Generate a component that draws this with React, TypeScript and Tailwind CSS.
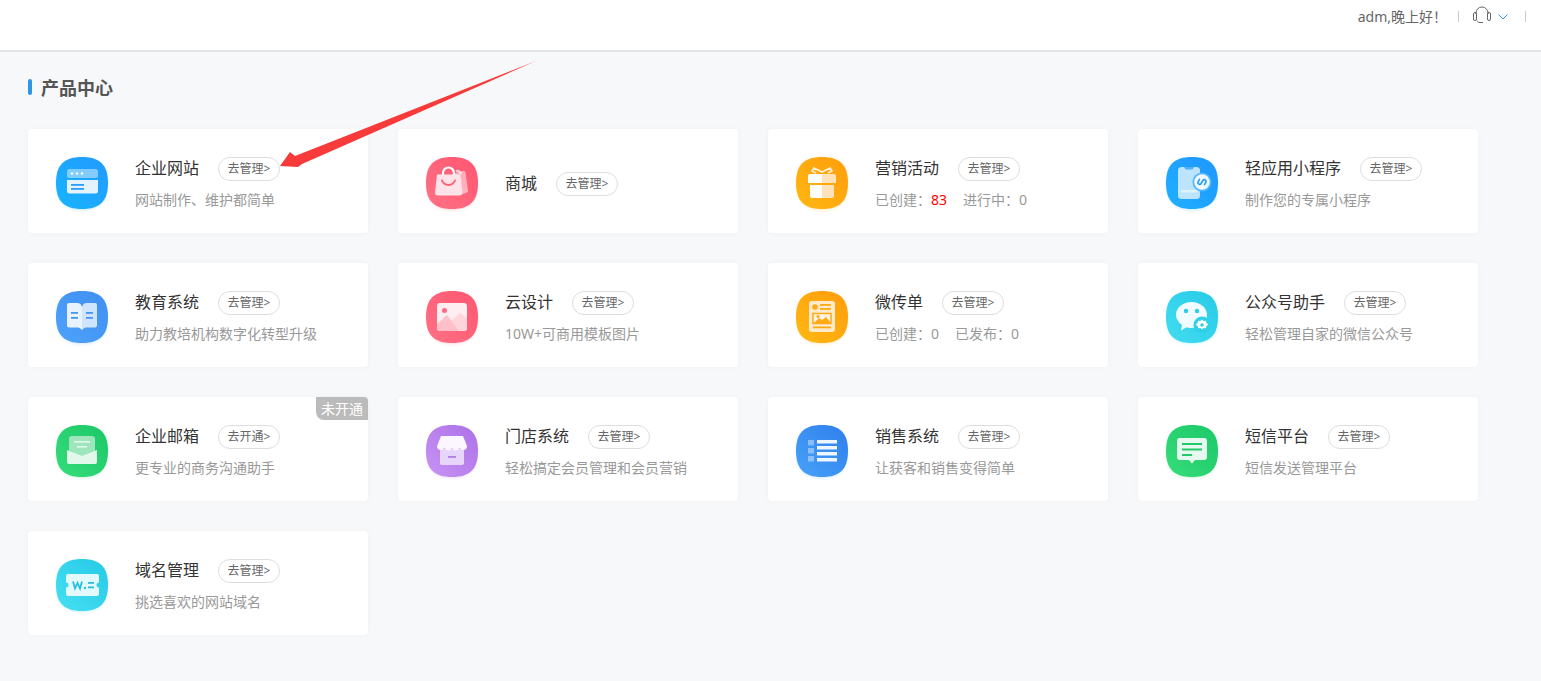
import type { ReactNode } from "react";

const FONT_CLASS = "font-['Noto_Sans','Noto_Sans_CJK_SC',sans-serif]";

type Product = {
  name: string;
  action?: string;
  desc?: string;
  stats?: [string, number, boolean?][];
  closed?: boolean;
  icon: ReactNode;
};

function Squircle({
  id,
  from,
  to,
  glow,
  children,
}: Readonly<{ id: string; from: string; to: string; glow: string; children: ReactNode }>) {
  return (
    <svg width="52" height="52" viewBox="0 0 52 52" className="shrink-0 overflow-visible">
      <defs>
        <linearGradient id={id} x1="1" y1="0" x2="0" y2="1">
          <stop offset="0" stopColor={from} />
          <stop offset="1" stopColor={to} />
        </linearGradient>
        <filter id={`${id}-glow`} x="-30%" y="-30%" width="160%" height="160%">
          <feGaussianBlur stdDeviation="2" />
        </filter>
      </defs>
      <path
        d="M26 3C42 3 50 10 50 27C50 44 42 52 26 52C10 52 2 44 2 27C2 10 10 3 26 3Z"
        fill={glow}
        filter={`url(#${id}-glow)`}
      />
      <path
        d="M26 0C44 0 52 8 52 26C52 44 44 52 26 52C8 52 0 44 0 26C0 8 8 0 26 0Z"
        fill={`url(#${id})`}
      />
      {children}
    </svg>
  );
}

const PRODUCTS: Product[] = [
  {
    name: "企业网站",
    desc: "网站制作、维护都简单",
    icon: (
      <Squircle id="site" from="#2299ff" to="#17b5ff" glow="#a8e0ff">
        <rect x="11" y="12" width="31" height="9" rx="2.500" fill="#ffffff" fillOpacity="0.45" />
        <circle cx="16" cy="16.500" r="1.200" fill="#ffffff" />
        <circle cx="21" cy="16.500" r="1.200" fill="#ffffff" />
        <circle cx="26" cy="16.500" r="1.200" fill="#ffffff" />
        <path d="M11 23h31v11a2.500 2.500 0 0 1-2.500 2.500h-26A2.500 2.500 0 0 1 11 34z" fill="#e4f3ff" />
        <rect x="15" y="27" width="13" height="1.800" fill="#2a9dff" />
        <rect x="15" y="31" width="13" height="1.800" fill="#2a9dff" />
      </Squircle>
    ),
  },
  {
    name: "商城",
    icon: (
      <Squircle id="shop" from="#ff5670" to="#ff7185" glow="#ffc4cd">
        <path d="M28 16l9-2a2 2 0 0 1 2.500 1.600l2.500 18a2 2 0 0 1-1.600 2.300L32 38z" fill="#ffffff" fillOpacity="0.5" />
        <path d="M30 14a4 4 0 0 1 5 3" fill="none" stroke="#ffffff" strokeOpacity="0.7" strokeWidth="2" />
        <path d="M11 17.500h23.500l2 18a3 3 0 0 1-3 3H12a3 3 0 0 1-3-3z" fill="#ffe3e8" />
        <path d="M17 18v-2a5.500 5.500 0 0 1 11 0v2" fill="none" stroke="#ffffff" strokeWidth="2.200" />
        <path d="M16 23.500a7 7 0 0 0 13 0" fill="none" stroke="#ff6079" strokeWidth="2" strokeLinecap="round" />
      </Squircle>
    ),
  },
  {
    name: "营销活动",
    stats: [
      ["已创建：", 83, true],
      ["进行中：", 0],
    ],
    icon: (
      <Squircle id="gift" from="#ff9d0d" to="#ffb812" glow="#ffe0a0">
        <path d="M26 15l-8-4-2 3 4 2M26 15l8-4 2 3-4 2" fill="none" stroke="#ffffff" strokeOpacity="0.85" strokeWidth="1.600" />
        <path d="M14 17h12v9H12v-7a2 2 0 0 1 2-2z" fill="#ffffff" />
        <path d="M26 17h12a2 2 0 0 1 2 2v7H26z" fill="#ffe3b8" />
        <path d="M14 28h12v13H16a2 2 0 0 1-2-2z" fill="#ffffff" />
        <path d="M26 28h12v11a2 2 0 0 1-2 2H26z" fill="#ffe3b8" />
      </Squircle>
    ),
  },
  {
    name: "轻应用小程序",
    desc: "制作您的专属小程序",
    icon: (
      <Squircle id="mini" from="#1f96ff" to="#1fb0ff" glow="#a8e0ff">
        <rect x="12" y="10" width="22" height="32" rx="3.500" fill="#ffffff" fillOpacity="0.7" />
        <path d="M18 10h10l-1.500 2.500h-7z" fill="#4cb1ff" />
        <rect x="15" y="33" width="16" height="2.500" fill="#ffffff" fillOpacity="0.5" />
        <circle cx="36" cy="25" r="9.500" fill="#4db6ff" />
        <circle cx="36" cy="25" r="7.800" fill="#f0f8ff" />
        <path d="M32.500 24v3a1.800 1.800 0 0 0 3.500 0v-4a1.800 1.800 0 0 1 3.500 0v3" fill="none" stroke="#1f9bff" strokeWidth="1.600" strokeLinecap="round" transform="rotate(30 36 25)" />
      </Squircle>
    ),
  },
  {
    name: "教育系统",
    desc: "助力教培机构数字化转型升级",
    icon: (
      <Squircle id="edu" from="#3f8ff0" to="#4ea2fb" glow="#b8dcff">
        <path d="M11 14a2 2 0 0 1 2-2h8a5 5 0 0 1 5 4v23c-2-2-3-2.500-5-2.500h-8a2 2 0 0 1-2-2z" fill="#e9f3ff" />
        <path d="M41 14a2 2 0 0 0-2-2h-8a5 5 0 0 0-5 4v23c2-2 3-2.500 5-2.500h8a2 2 0 0 0 2-2z" fill="#cfe4fd" />
        <rect x="15" y="21" width="7" height="1.800" fill="#4795f3" />
        <rect x="15" y="26" width="7" height="1.800" fill="#4795f3" />
        <rect x="30" y="21" width="7" height="1.800" fill="#4795f3" />
        <rect x="30" y="26" width="7" height="1.800" fill="#4795f3" />
      </Squircle>
    ),
  },
  {
    name: "云设计",
    desc: "10W+可商用模板图片",
    icon: (
      <Squircle id="design" from="#ff5670" to="#ff7185" glow="#ffc4cd">
        <rect x="11" y="12" width="30" height="28" rx="3" fill="#ffeef1" />
        <circle cx="18.500" cy="19.500" r="2.500" fill="#ff6a80" />
        <path d="M25 30l9-8 7 5v10a3 3 0 0 1-3 3h-5z" fill="#ffd5dc" />
        <path d="M11 33l10-9 12 16H14a3 3 0 0 1-3-3z" fill="#ffc0ca" />
      </Squircle>
    ),
  },
  {
    name: "微传单",
    stats: [
      ["已创建：", 0],
      ["已发布：", 0],
    ],
    icon: (
      <Squircle id="flyer" from="#ff9d0d" to="#ffb812" glow="#ffe0a0">
        <rect x="13" y="10" width="26" height="31" rx="3" fill="#ffeacb" />
        <circle cx="19" cy="16" r="2.800" fill="#ffa914" />
        <rect x="24" y="13" width="11" height="1.800" fill="#ffa914" />
        <rect x="24" y="17" width="11" height="1.800" fill="#ffa914" />
        <rect x="17" y="22.500" width="18" height="10" fill="#ffffff" fillOpacity="0.5" stroke="#ffa914" strokeWidth="1.500" />
        <path d="M18 32l5-5 3 2 4-3 5 6z" fill="#ffa914" />
        <circle cx="22" cy="25.500" r="1.500" fill="#ffa914" />
        <rect x="17" y="35.500" width="18" height="1.800" fill="#ffa914" />
      </Squircle>
    ),
  },
  {
    name: "公众号助手",
    desc: "轻松管理自家的微信公众号",
    icon: (
      <Squircle id="wechat" from="#28cbe8" to="#42dcf0" glow="#b4f0fa">
        <path d="M25.500 11C34 11 41 16.500 41 24s-7 13-15.500 13c-2 0-3.500-.3-5-.8L15 39.500l1-5.500C12.500 31.500 10 28 10 24c0-7.500 7-13 15.500-13z" fill="#f0fcff" />
        <circle cx="20" cy="20" r="2.200" fill="#2acfe8" />
        <circle cx="31" cy="20" r="2.200" fill="#2acfe8" />
        <circle cx="36" cy="34" r="8.500" fill="#2fd0ea" />
        <path d="M36 28.500l1.500 1.500 2.300-.3.700 2.200 1.800 1.600-1.800 1.600-.7 2.200-2.300-.3-1.500 1.500-1.500-1.500-2.300.3-.7-2.200-1.800-1.600 1.800-1.600.7-2.200 2.300.3z" fill="#ffffff" />
        <circle cx="36" cy="34" r="1.800" fill="#2fd0ea" />
      </Squircle>
    ),
  },
  {
    name: "企业邮箱",
    action: "去开通>",
    desc: "更专业的商务沟通助手",
    closed: true,
    icon: (
      <Squircle id="mail" from="#1cc868" to="#36dc7a" glow="#b0f0c8">
        <path d="M13 14a3 3 0 0 1 3-3h20a3 3 0 0 1 3 3v12l-13 7-13-7z" fill="#9de6bb" />
        <rect x="18" y="16" width="16" height="1.600" fill="#e4f9ec" />
        <rect x="21" y="21" width="10" height="1.600" fill="#e4f9ec" />
        <path d="M11 25l15 6 15-6v12a2 2 0 0 1-2 2H13a2 2 0 0 1-2-2z" fill="#e2f8ea" />
      </Squircle>
    ),
  },
  {
    name: "门店系统",
    desc: "轻松搞定会员管理和会员营销",
    icon: (
      <Squircle id="store" from="#ad71e8" to="#c793f3" glow="#e4ccf8">
        <rect x="14" y="24" width="24" height="16" rx="2" fill="#e8d6fa" />
        <rect x="22" y="31" width="8" height="1.800" fill="#b27eea" />
        <path d="M15 11h22l4 10a4 4 0 0 1-7.500 2 4 4 0 0 1-7.500 0 4 4 0 0 1-7.500 0A4 4 0 0 1 11 21z" fill="#fbf6ff" />
      </Squircle>
    ),
  },
  {
    name: "销售系统",
    desc: "让获客和销售变得简单",
    icon: (
      <Squircle id="sales" from="#2f7fec" to="#47a2f8" glow="#b8dcff">
        <rect x="12" y="15" width="6" height="5.500" fill="#ffffff" fillOpacity="0.4" />
        <rect x="12" y="23" width="6" height="5.500" fill="#ffffff" fillOpacity="0.4" />
        <rect x="12" y="31" width="6" height="5.500" fill="#ffffff" fillOpacity="0.4" />
        <rect x="21" y="15" width="20" height="3.500" fill="#eef6ff" />
        <rect x="21" y="21" width="20" height="3.500" fill="#eef6ff" />
        <rect x="21" y="27" width="20" height="3.500" fill="#eef6ff" />
        <rect x="21" y="33" width="20" height="3.500" fill="#eef6ff" />
      </Squircle>
    ),
  },
  {
    name: "短信平台",
    desc: "短信发送管理平台",
    icon: (
      <Squircle id="sms" from="#1cc868" to="#36dc7a" glow="#b0f0c8">
        <path d="M14 13h24a3 3 0 0 1 3 3v16a3 3 0 0 1-3 3H29l-3 3.500L23 35h-9a3 3 0 0 1-3-3V16a3 3 0 0 1 3-3z" fill="#e6f9ee" />
        <rect x="16" y="18" width="20" height="2" fill="#22c96a" />
        <rect x="16" y="23.500" width="20" height="2" fill="#22c96a" />
        <rect x="16" y="29" width="10" height="2" fill="#22c96a" />
      </Squircle>
    ),
  },
  {
    name: "域名管理",
    desc: "挑选喜欢的网站域名",
    icon: (
      <Squircle id="domain" from="#25c9e8" to="#48e0f2" glow="#b4f0fa">
        <path d="M12 15h29a2 2 0 0 1 2 2v6.500a2.500 2.500 0 0 0 0 5V35a2 2 0 0 1-2 2H12a2 2 0 0 1-2-2v-6.500a2.500 2.500 0 0 0 0-5V17a2 2 0 0 1 2-2z" fill="#e2f9fd" />
        <path d="M17 22.500l2 7 2.500-5.500 2.500 5.500 2-7" fill="none" stroke="#22bfe0" strokeWidth="1.800" />
        <circle cx="29" cy="29" r="1.200" fill="#22bfe0" />
        <rect x="32" y="23" width="6" height="1.800" fill="#22bfe0" />
        <rect x="32" y="27.500" width="6" height="1.800" fill="#22bfe0" />
      </Squircle>
    ),
  },
];

function ProductCard({ product }: Readonly<{ product: Product }>) {
  return (
    <article className="relative flex h-[104px] items-center gap-[27px] rounded-[4px] bg-white pl-7 pt-1 shadow-[0_0_6px_rgba(0,0,0,0.03)]">
      {product.icon}
      <div className="flex flex-col gap-[8px] pt-[2px]">
        <div className="flex items-center gap-[19px]">
          <h3 className="pb-[2px] text-base leading-[22px] text-[#333333]">{product.name}</h3>
          <span className="flex h-6 w-[62px] items-center justify-center rounded-full border border-[#dddddd] text-xs text-[#666666]">
            {product.action ?? "去管理>"}
          </span>
        </div>
        {product.desc ? (
          <p className="text-sm leading-[22px] text-[#999999]">{product.desc}</p>
        ) : null}
        {product.stats ? (
          <div className="flex gap-4 text-sm leading-[22px] text-[#999999]">
            {product.stats.map(([label, value, hot]) => (
              <span key={label}>
                {label}
                <span className={hot ? "text-[#ff0000]" : ""}>{value}</span>
              </span>
            ))}
          </div>
        ) : null}
      </div>
      {product.closed ? (
        <span className="absolute right-0 top-0 flex h-[23px] w-[52px] items-center justify-center rounded-bl-lg rounded-tr-[4px] bg-[#bbbbbb] text-sm text-white">
          未开通
        </span>
      ) : null}
    </article>
  );
}

export default function App() {
  return (
    <div className={`relative h-screen overflow-hidden bg-[#f7f8fa] ${FONT_CLASS}`}>
      <header className="flex h-[52px] items-start justify-end border-b-2 border-[#e4e4e4] bg-white pr-[15px] pt-[6px]">
        <span className="text-sm leading-[22px] text-[#666666]">adm,晚上好！</span>
        <span className="ml-[11px] mt-[5px] h-[11px] w-px bg-[#cccccc]" />
        <svg className="ml-[13px] text-[#666666]" width="20" height="18" viewBox="0 0 20 18" fill="none" stroke="currentColor" strokeWidth="1">
          <path d="M4 8V7a6 6 0 0 1 12 0v1" />
          <rect x="1.500" y="6.500" width="3" height="8" rx="1.500" />
          <rect x="15.500" y="6.500" width="3" height="8" rx="1.500" />
          <path d="M5 14.500c.5 1.500 1.500 2 3 2h3" />
        </svg>
        <svg className="ml-[5px] mt-[7px] text-[#2d9bef]" width="12" height="8" viewBox="0 0 12 8" fill="none" stroke="currentColor" strokeWidth="1">
          <path d="M1.500 1.500L6 6l4.500-4.500" />
        </svg>
        <span className="ml-[16px] mt-[5px] h-[11px] w-px bg-[#cccccc]" />
      </header>

      <main className="pl-7">
        <h2 className="mt-[24px] flex h-[22px] items-center gap-[9px] text-lg font-bold text-[#555555]">
          <span className="h-4 w-1 rounded-[2px] bg-[#2f96e6]" />
          <span className="pt-[2px]">产品中心</span>
        </h2>
        <section className="mt-[31px] grid w-fit grid-cols-[repeat(4,340px)] gap-[30px]">
          {PRODUCTS.map((product) => (
            <ProductCard key={product.name} product={product} />
          ))}
        </section>
      </main>

      <svg className="pointer-events-none absolute left-0 top-0" width="600" height="200" viewBox="0 0 600 200">
        <polygon points="536,61 295,156 290,152 280,166 298,167 302,164" fill="#f73b3b" />
      </svg>
    </div>
  );
}
